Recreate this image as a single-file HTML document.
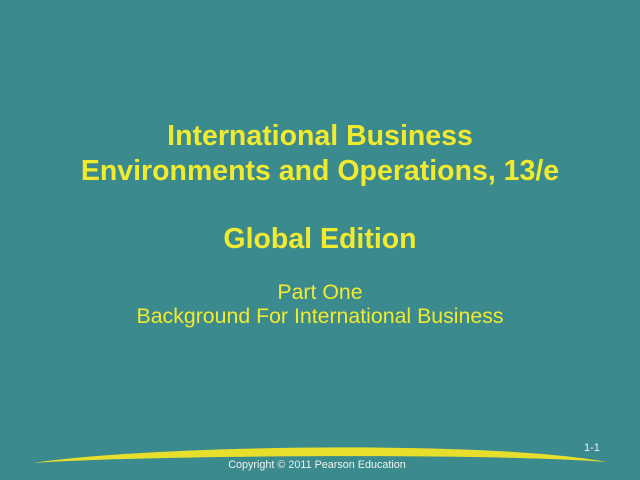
<!DOCTYPE html>
<html><head><meta charset="utf-8"><style>
html,body{margin:0;padding:0}
body{width:640px;height:480px;background:#3b8a8e;position:relative;overflow:hidden;font-family:"Liberation Sans",Arial,sans-serif;color:#f2ea2e}
.c{position:absolute;left:0;width:640px;text-align:center;white-space:nowrap}
.t{font-size:28.5px;line-height:28px;font-weight:bold}
.s{font-size:21.3px;line-height:21px}
</style></head><body>
<div class="c t" style="top:122px">International Business</div>
<div class="c t" style="top:157px">Environments and Operations, 13/e</div>
<div class="c t" style="top:225px">Global Edition</div>
<div class="c s" style="top:282px">Part One</div>
<div class="c s" style="top:306px">Background For International Business</div>
<svg style="position:absolute;left:0;top:0" width="640" height="480">
<path d="M33 463 C150 445 490 440 607 462 C490 453 150 455 33 463 Z" fill="#e8df2c"/>
</svg>
<div style="position:absolute;left:584px;top:443px;font-size:11px;line-height:11px;color:#f0f4f0">1-1</div>
<div class="c" style="top:460px;font-size:10.8px;line-height:11px;color:#f0f4f0;left:-3px">Copyright © 2011 Pearson Education</div>
</body></html>
